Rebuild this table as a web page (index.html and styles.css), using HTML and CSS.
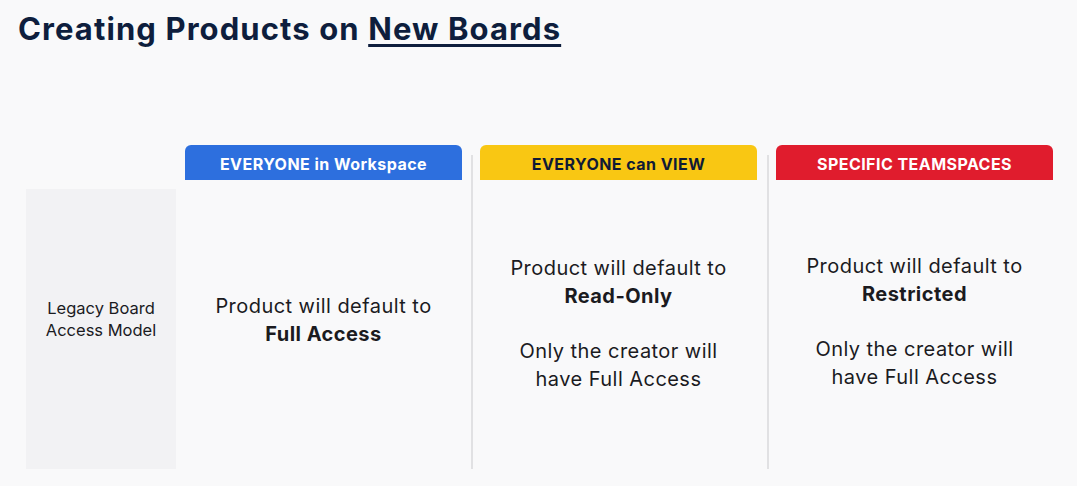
FILE: index.html
```html
<!DOCTYPE html>
<html lang="en">
<head>
<meta charset="utf-8">
<title>Creating Products on New Boards</title>
<link rel="stylesheet" href="styles.css">
</head>
<body>
<div class="page">
  <h1 class="title">Creating Products on <span class="u">New Boards</span></h1>
  <div class="table">
    <div class="legacy">
      <div class="legacy-box">Legacy Board<br>Access Model</div>
    </div>
    <div class="col col-first">
      <div class="head head-blue">EVERYONE in Workspace</div>
      <div class="body body-first">
        <p>Product will default to<br><b>Full Access</b></p>
      </div>
    </div>
    <div class="col col-sep">
      <div class="head head-yellow">EVERYONE can VIEW</div>
      <div class="body body-mid">
        <p>Product will default to<br><b>Read-Only</b></p>
        <p>Only the creator will<br>have Full Access</p>
      </div>
    </div>
    <div class="col col-sep col-last">
      <div class="head head-red">SPECIFIC TEAMSPACES</div>
      <div class="body body-last">
        <p>Product will default to<br><b>Restricted</b></p>
        <p>Only the creator will<br>have Full Access</p>
      </div>
    </div>
  </div>
</div>
</body>
</html>
```
FILE: styles.css
```css
html, body {
  margin: 0;
  padding: 0;
  background: #f9f9fa;
}
body {
  font-family: Inter, "Open Sans", sans-serif;
  color: #1b1b1f;
  width: 1077px;
  height: 486px;
  overflow: hidden;
}
.page {
  padding: 0 0 0 18px;
}
.title {
  margin: 0;
  padding-top: 10px;
  font-size: 31px;
  line-height: 38px;
  font-weight: 700;
  color: #0e1e3d;
  letter-spacing: 1.1px;
}
.title .u {
  text-decoration: underline;
  text-decoration-thickness: 3px;
  text-underline-offset: 4px;
}
.table {
  display: flex;
  margin-top: 97px;
  margin-left: 8px;
  height: 324px;
}
.legacy {
  width: 150px;
  display: flex;
  flex-direction: column;
  justify-content: flex-end;
}
.legacy-box {
  height: 280px;
  background: #f2f2f4;
  display: flex;
  align-items: center;
  justify-content: center;
  text-align: center;
  font-size: 16.5px;
  line-height: 22px;
  padding-bottom: 20px;
  box-sizing: border-box;
  color: #1b1b1f;
  white-space: nowrap;
}
.col {
  display: flex;
  flex-direction: column;
  margin-left: 9px;
  width: 277px;
}
.col-sep {
  border-left: 2px solid #e1e1e3;
  padding-left: 7px;
  margin-top: 10px;
}
.col-sep .head {
  margin-top: -10px;
}
.col-last {
  margin-left: 10px;
}
.head {
  height: 35px;
  padding-top: 2px;
  box-sizing: border-box;
  border-radius: 6px 6px 0 0;
  display: flex;
  align-items: center;
  justify-content: center;
  font-size: 16px;
  font-weight: 700;
  color: #fff;
  letter-spacing: 0.45px;
  white-space: nowrap;
}
.head-blue { background: #2d6fde; }
.head-yellow { background: #f9c713; color: #101a35; }
.head-red { background: #e01c2d; }
.body {
  flex: 1;
  display: flex;
  flex-direction: column;
  align-items: center;
  justify-content: center;
  text-align: center;
  font-size: 20px;
  line-height: 28px;
  letter-spacing: 0.45px;
  white-space: nowrap;
}
.body-first {
  padding-bottom: 10px;
}
.body-mid {
  padding-bottom: 2px;
}
.body-last {
  padding-bottom: 7px;
}
.body p {
  margin: 0;
}
.body p + p {
  margin-top: 27px;
}
.body b {
  font-weight: 700;
}
```
